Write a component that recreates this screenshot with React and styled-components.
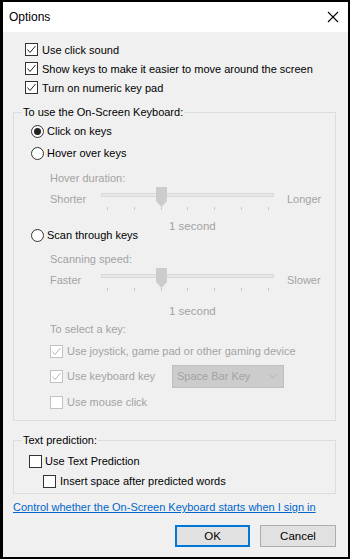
import React from "react";
import styled, { createGlobalStyle } from "styled-components";

const DISABLED = "#a3a3a3";

const GlobalStyle = createGlobalStyle`
  html, body {
    margin: 0;
    padding: 0;
    background: #000;
  }
  body {
    font-family: "Liberation Sans", Arial, sans-serif;
    font-size: 11px;
  }
`;

const Window = styled.div`
  width: 350px;
  height: 559px;
  box-sizing: border-box;
  border: 2px solid #000;
  border-left-width: 3px;
  display: flex;
  flex-direction: column;
  background: #f0f0f0;
  color: #000;
`;

const TitleBar = styled.div`
  height: 30px;
  flex-shrink: 0;
  background: #fff;
  display: flex;
  align-items: center;
  justify-content: space-between;
  padding: 0 9px 0 6px;
`;

const Title = styled.span`
  font-size: 12px;
  color: #000;
`;

const Body = styled.div`
  flex: 1;
  padding: 8px 12px 0 10px;
  display: flex;
  flex-direction: column;
`;

const TopChecks = styled.div`
  margin-left: 12px;
`;

const Row = styled.div`
  display: flex;
  align-items: center;
  height: ${p => p.h || 20}px;
  margin-top: ${p => p.mt || 0}px;
  margin-left: ${p => p.ml || 0}px;
`;

const Label = styled.span`
  margin-left: ${p => p.gap || 4}px;
  color: ${p => (p.disabled ? DISABLED : "#000")};
  width: ${p => (p.w ? `${p.w}px` : "auto")};
  white-space: nowrap;
  line-height: 16px;
`;

const Box = styled.span`
  width: 13px;
  height: 13px;
  box-sizing: border-box;
  flex-shrink: 0;
  border: 1px solid ${p => (p.disabled ? "#c2c2c2" : "#333")};
  background: #fff;
  display: flex;
`;

const Round = styled.span`
  width: 13px;
  height: 13px;
  box-sizing: border-box;
  flex-shrink: 0;
  border: 1px solid #333;
  border-radius: 50%;
  background: #fff;
  display: flex;
  align-items: center;
  justify-content: center;
`;

const Dot = styled.span`
  width: 7px;
  height: 7px;
  border-radius: 50%;
  background: #222;
`;

const Group = styled.fieldset`
  margin: ${p => p.mt || 0}px 0 0 0;
  padding: 0 0 ${p => p.pb || 0}px 8px;
  border: 1px solid #dcdcdc;
  min-width: 0;
`;

const Legend = styled.legend`
  padding: 0 1px;
  line-height: 16px;
  font-size: 11px;
  color: #000;
`;

const Options = styled.div`
  margin-left: 9px;
  display: flex;
  flex-direction: column;
`;

const Sub = styled.div`
  margin-left: 19px;
  display: flex;
  flex-direction: column;
`;

const FieldLabel = styled.div`
  line-height: 16px;
  color: ${DISABLED};
  margin-top: ${p => p.mt || 0}px;
`;

const SliderRow = styled.div`
  display: flex;
  align-items: flex-start;
  height: 27px;
`;

const EndLabel = styled.span`
  line-height: 16px;
  margin-top: 5px;
  color: ${DISABLED};
  width: ${p => p.w || 0}px;
  flex-shrink: 0;
  white-space: nowrap;
`;

const TrackArea = styled.div`
  position: relative;
  width: 173px;
  height: 27px;
  flex-shrink: 0;
  margin-right: 13px;
`;

const TrackLine = styled.div`
  margin-top: 7px;
  height: 4px;
  box-sizing: border-box;
  background: #e7e7e7;
  border: 1px solid #d9d9d9;
`;

const Ticks = styled.div`
  display: flex;
  justify-content: space-between;
  padding: 0 5px 0 6px;
  margin-top: 10px;
`;

const Tick = styled.span`
  width: 1px;
  height: 3px;
  background: #c6c6c6;
`;

const Thumb = styled.svg`
  position: absolute;
  left: 55px;
  top: 1px;
`;

const ValueLabel = styled.div`
  line-height: 16px;
  color: ${DISABLED};
  margin-left: 119px;
  margin-top: ${p => p.mt || 0}px;
  margin-bottom: ${p => p.mb || 0}px;
  font-size: 11.5px;
`;

const Select = styled.div`
  width: 112px;
  height: 23px;
  box-sizing: border-box;
  background: #cccccc;
  border: 1px solid #c0c0c0;
  color: ${DISABLED};
  display: flex;
  align-items: center;
  justify-content: space-between;
  padding: 0 6px 0 4px;
  line-height: 16px;
`;

const LinkText = styled.a`
  margin-top: 5px;
  line-height: 16px;
  color: #0066cc;
  text-decoration: underline;
  cursor: pointer;
  align-self: flex-start;
  white-space: nowrap;
`;

const ButtonRow = styled.div`
  display: flex;
  justify-content: flex-end;
  gap: 10px;
  margin-top: 10px;
`;

const Button = styled.button`
  width: ${p => p.w || 75}px;
  height: 22px;
  box-sizing: border-box;
  background: #e1e1e1;
  border: ${p => (p.primary ? "2px solid #0078d7" : "1px solid #adadad")};
  font-family: inherit;
  font-size: 11.5px;
  color: #000;
  padding: 0;
`;

const Check = ({ checked, disabled }) => (
  <Box disabled={disabled}>
    {checked && (
      <svg width="11" height="11" viewBox="0 0 11 11">
        <polyline
          points="1.5,5.5 4,8.5 9.5,2"
          fill="none"
          stroke={disabled ? "#b8b8b8" : "#222"}
          strokeWidth="1"
        />
      </svg>
    )}
  </Box>
);

const CheckRow = ({ label, checked, disabled, h, mt, ml, gap, children, w }) => (
  <Row h={h} mt={mt} ml={ml}>
    <Check checked={checked} disabled={disabled} />
    <Label disabled={disabled} gap={gap} w={w}>{label}</Label>
    {children}
  </Row>
);

const RadioRow = ({ label, checked }) => (
  <Row h={22}>
    <Round>{checked && <Dot />}</Round>
    <Label gap={3}>{label}</Label>
  </Row>
);

const Slider = ({ left, right }) => (
  <SliderRow>
    <EndLabel w={51}>{left}</EndLabel>
    <TrackArea>
      <TrackLine />
      <Ticks>
        {[0, 1, 2, 3, 4, 5, 6].map(i => <Tick key={i} />)}
      </Ticks>
      <Thumb width="11" height="20" viewBox="0 0 11 20">
        <polygon points="0,0 11,0 11,14 5.5,20 0,14" fill="#cccccc" />
      </Thumb>
    </TrackArea>
    <EndLabel>{right}</EndLabel>
  </SliderRow>
);

export default function App() {
  return (
    <>
      <GlobalStyle />
      <Window>
        <TitleBar>
          <Title>Options</Title>
          <svg width="12" height="12" viewBox="0 0 12 12">
            <path d="M1 1 L11 11 M11 1 L1 11" stroke="#000" strokeWidth="1.1" fill="none" />
          </svg>
        </TitleBar>
        <Body>
          <TopChecks>
            <CheckRow h={19} checked label="Use click sound" />
            <CheckRow h={19} checked label="Show keys to make it easier to move around the screen" />
            <CheckRow h={19} checked label="Turn on numeric key pad" />
          </TopChecks>

          <Group mt={7} pb={8}>
            <Legend>To use the On-Screen Keyboard:</Legend>
            <Options>
              <RadioRow checked label="Click on keys" />
              <RadioRow label="Hover over keys" />
              <Sub>
                <FieldLabel mt={6}>Hover duration:</FieldLabel>
                <Slider left="Shorter" right="Longer" />
                <ValueLabel mt={5} mb={-10}>1 second</ValueLabel>
              </Sub>
              <RadioRow label="Scan through keys" />
              <Sub>
                <FieldLabel mt={5}>Scanning speed:</FieldLabel>
                <Slider left="Faster" right="Slower" />
                <ValueLabel mt={9}>1 second</ValueLabel>
                <FieldLabel mt={2}>To select a key:</FieldLabel>
                <CheckRow mt={4} checked disabled label="Use joystick, game pad or other gaming device" />
                <CheckRow h={24} mt={3} checked disabled label="Use keyboard key" w={105}>
                  <Select>
                    <span>Space Bar Key</span>
                    <svg width="8" height="5" viewBox="0 0 8 5">
                      <polyline points="0.5,0.5 4,4 7.5,0.5" fill="none" stroke="#b4b4b4" strokeWidth="1" />
                    </svg>
                  </Select>
                </CheckRow>
                <CheckRow mt={4} disabled label="Use mouse click" />
              </Sub>
            </Options>
          </Group>

          <Group mt={11} pb={2}>
            <Legend>Text prediction:</Legend>
            <CheckRow mt={3} ml={7} gap={3} label="Use Text Prediction" />
            <CheckRow ml={21} label="Insert space after predicted words" />
          </Group>

          <LinkText>Control whether the On-Screen Keyboard starts when I sign in</LinkText>

          <ButtonRow>
            <Button primary w={75}>OK</Button>
            <Button w={76}>Cancel</Button>
          </ButtonRow>
        </Body>
      </Window>
    </>
  );
}
